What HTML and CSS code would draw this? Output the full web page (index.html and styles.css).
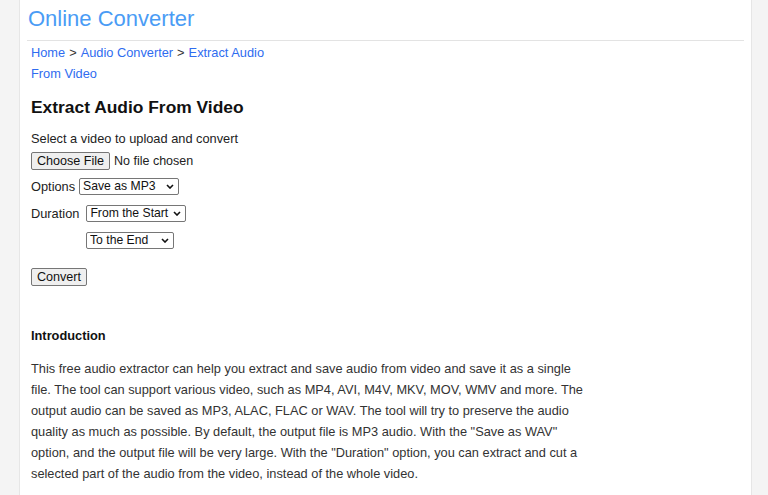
FILE: index.html
```html
<!DOCTYPE html>
<html lang="en">
<head>
<meta charset="utf-8">
<title>Extract Audio From Video - Online Converter</title>
<link rel="stylesheet" href="styles.css">
</head>
<body>
<div class="page">
  <header class="site-header">
    <a class="site-title" href="#">Online Converter</a>
  </header>
  <main class="content">
    <nav class="breadcrumb"><a href="#">Home</a><span class="sep">&gt;</span><a href="#">Audio Converter</a><span class="sep">&gt;</span><a href="#">Extract Audio From Video</a></nav>
    <h1 class="page-title">Extract Audio From Video</h1>
    <form class="converter">
      <div class="prompt">Select a video to upload and convert</div>
      <div class="file-row">
        <button type="button" class="btn btn-file">Choose File</button>
        <span class="file-name">No file chosen</span>
      </div>
      <div class="opt-row">
        <span class="label">Options</span>
        <span class="sel-wrap">
          <select class="sel sel-options">
            <option>Save as MP3</option>
            <option>Save as ALAC</option>
            <option>Save as FLAC</option>
            <option>Save as WAV</option>
          </select>
          <svg class="chev" width="8" height="5" viewBox="0 0 8 5"><path d="M1 1l3 3 3-3" fill="none" stroke="#111" stroke-width="1.6"/></svg>
        </span>
      </div>
      <div class="dur-row">
        <span class="label label-dur">Duration</span>
        <span class="sel-wrap">
          <select class="sel sel-from">
            <option>From the Start</option>
          </select>
          <svg class="chev" width="8" height="5" viewBox="0 0 8 5"><path d="M1 1l3 3 3-3" fill="none" stroke="#111" stroke-width="1.6"/></svg>
        </span>
      </div>
      <div class="dur-row second">
        <span class="sel-wrap">
          <select class="sel sel-to">
            <option>To the End</option>
          </select>
          <svg class="chev" width="8" height="5" viewBox="0 0 8 5"><path d="M1 1l3 3 3-3" fill="none" stroke="#111" stroke-width="1.6"/></svg>
        </span>
      </div>
      <div class="submit-row">
        <button type="button" class="btn btn-convert">Convert</button>
      </div>
    </form>
    <section class="intro">
      <h2 class="intro-title">Introduction</h2>
      <p class="intro-text">This free audio extractor can help you extract and save audio from video and save it as a single file. The tool can support various video, such as MP4, AVI, M4V, MKV, MOV, WMV and more. The output audio can be saved as MP3, ALAC, FLAC or WAV. The tool will try to preserve the audio quality as much as possible. By default, the output file is MP3 audio. With the "Save as WAV" option, and the output file will be very large. With the "Duration" option, you can extract and cut a selected part of the audio from the video, instead of the whole video.</p>
    </section>
  </main>
</div>
</body>
</html>
```

FILE: styles.css
```css
html, body {
  margin: 0;
  padding: 0;
}
body {
  background: #f4f4f4;
  font-family: "Liberation Sans", Arial, sans-serif;
  font-size: 12.8px;
  color: #333;
}
.page {
  margin-left: 19px;
  width: 733px;
  min-height: 495px;
  background: #fff;
  border-left: 1px solid #e6e6e6;
  border-right: 1px solid #e6e6e6;
  padding: 0 7px;
  box-sizing: border-box;
}
.site-header {
  height: 41px;
  box-sizing: border-box;
  padding: 6px 0 0 1px;
  border-bottom: 1px solid #e3e3e3;
}
.site-title {
  font-size: 22px;
  line-height: 26px;
  color: #4a9cf5;
  text-decoration: none;
}
.content {
  padding-left: 4px;
}
.breadcrumb {
  width: 250px;
  margin-top: 1px;
  line-height: 21px;
  color: #333;
}
.breadcrumb a {
  color: #2f6cf0;
  text-decoration: none;
}
.sep {
  margin: 0 4px;
}
.page-title {
  margin: 12px 0 0;
  font-size: 17.4px;
  line-height: 22px;
  color: #111;
  font-weight: bold;
}
.converter {
  margin: 0;
}
.prompt {
  margin-top: 10px;
  line-height: 21px;
  color: #222;
}
.file-row {
  display: flex;
  align-items: center;
  margin-top: 3px;
  height: 18px;
}
.btn {
  font-family: "Liberation Sans", Arial, sans-serif;
  font-size: 12.6px;
  color: #111;
  background: #efefef;
  border: 1px solid #767676;
  border-radius: 2px;
  height: 18px;
  padding: 0;
  line-height: 16px;
  margin: 0;
  box-sizing: border-box;
}
.btn-file {
  width: 79px;
}
.file-name {
  margin-left: 4px;
  color: #222;
  font-size: 12.5px;
}
.opt-row, .dur-row {
  display: flex;
  align-items: center;
  height: 17px;
  color: #222;
}
.opt-row {
  margin-top: 8px;
}
.dur-row {
  margin-top: 10px;
}
.dur-row.second {
  padding-left: 55px;
}
.label {
  margin-right: 4px;
}
.label-dur {
  margin-right: 7px;
}
.sel-wrap {
  position: relative;
  display: inline-flex;
}
.sel {
  appearance: none;
  -webkit-appearance: none;
  font-family: "Liberation Sans", Arial, sans-serif;
  font-size: 12.2px;
  color: #111;
  height: 17px;
  line-height: 15px;
  padding: 0 14px 0 3px;
  border: 1px solid #767676;
  border-radius: 2px;
  background: #fff;
  box-sizing: border-box;
  margin: 0;
}
.chev {
  position: absolute;
  right: 5px;
  top: 6px;
  pointer-events: none;
}
.sel-options { width: 100px; }
.sel-from { width: 100px; }
.sel-to { width: 88px; }
.submit-row {
  margin-top: 19px;
  height: 18px;
  display: flex;
}
.btn-convert {
  width: 56px;
}
.intro {
  margin-top: 40px;
}
.intro-title {
  margin: 0;
  font-size: 12.8px;
  line-height: 20px;
  font-weight: bold;
  color: #111;
}
.intro-text {
  margin: 12px 0 0;
  max-width: 560px;
  line-height: 21px;
  color: #333;
}
```
